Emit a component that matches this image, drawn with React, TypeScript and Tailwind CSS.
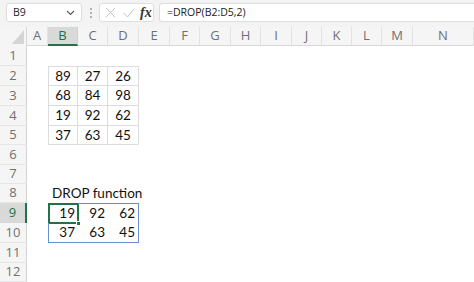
import React from "react";

const colW = [21, 30, 30, 31, 31, 30, 31, 30, 31, 30, 30, 30, 31, 61];
const colL = ["A", "B", "C", "D", "E", "F", "G", "H", "I", "J", "K", "L", "M", "N"];
const rowH = [20, 20, 20, 20, 19, 20, 19, 19, 20, 20, 20, 19];

const data: Record<string, string> = {
  "2-1": "89", "2-2": "27", "2-3": "26",
  "3-1": "68", "3-2": "84", "3-3": "98",
  "4-1": "19", "4-2": "92", "4-3": "62",
  "5-1": "37", "5-2": "63", "5-3": "45",
  "9-1": "19", "9-2": "92", "9-3": "62",
  "10-1": "37", "10-2": "63", "10-3": "45",
};

function cellClass(r: number, c: number): string {
  const cls: string[] = [];
  if (r >= 2 && r <= 5 && c >= 1 && c <= 3) {
    cls.push("border-r border-b border-[#dcdcdc] justify-center");
    if (r === 2) cls.push("border-t");
    if (c === 1) cls.push("border-l");
  }
  if (r >= 9 && r <= 10 && c >= 1 && c <= 3) {
    cls.push("justify-end pr-[3px] border-[#6a8fd0]");
    if (r === 9) cls.push("border-t");
    if (r === 10) cls.push("border-b");
    if (c === 1) cls.push("border-l");
    if (c === 3) cls.push("border-r");
  }
  return cls.join(" ");
}

export default function App() {
  return (
    <div
      className="w-[474px] h-[282px] overflow-hidden bg-white relative"
      style={{ fontFamily: "'Open Sans', 'Noto Sans', sans-serif" }}
    >
      {/* Formula bar */}
      <div className="h-[27px] bg-[#f3f3f3] flex items-start pt-[3px] pl-[6px]">
        <div className="w-[76px] h-[19px] bg-white border border-[#dedede] rounded-[3px] flex items-center pl-[6px] pr-[4px] text-[10.5px] text-[#222]">
          <span className="flex-1">B9</span>
          <svg width="9" height="6" viewBox="0 0 9 6" className="mr-[2px]">
            <path d="M1 1 L4.5 4.5 L8 1" fill="none" stroke="#555" strokeWidth="1.1" />
          </svg>
        </div>
        <div className="w-[17px] h-[19px] flex flex-col items-center justify-center gap-[2px]">
          <div className="w-[2px] h-[2px] bg-[#9a9a9a] rounded-full" />
          <div className="w-[2px] h-[2px] bg-[#9a9a9a] rounded-full" />
          <div className="w-[2px] h-[2px] bg-[#9a9a9a] rounded-full" />
        </div>
        <div className="w-[55px] h-[19px] bg-white border border-[#dedede] rounded-[3px] flex items-center">
          <svg width="11" height="11" viewBox="0 0 11 11" className="ml-[5px]">
            <path d="M1 1 L10 10 M10 1 L1 10" stroke="#c4c4c4" strokeWidth="1" />
          </svg>
          <svg width="12" height="10" viewBox="0 0 12 10" className="ml-[7px]">
            <path d="M1 5 L4.5 9 L11 1" fill="none" stroke="#c4c4c4" strokeWidth="1" />
          </svg>
          <span
            className="ml-[5px] text-[14px] italic font-bold text-[#333] leading-none"
            style={{ fontFamily: "'Liberation Serif', serif" }}
          >
            fx
          </span>
        </div>
        <div className="ml-[5px] flex-1 h-[19px] bg-white border border-[#dedede] border-r-0 rounded-l-[3px] flex items-center pl-[7px] text-[10.5px] text-[#222]">
          =DROP(B2:D5,2)
        </div>
      </div>

      {/* Column headers */}
      <div className="h-[19px] flex bg-[#f5f5f5]">
        <div className="w-[27px] h-full relative border-r border-[#d8d8d8]">
          <svg width="12" height="14" viewBox="0 0 12 14" className="absolute right-[2px] bottom-[2px]">
            <path d="M12 0 L12 14 L0 14 Z" fill="#d4d4d4" />
          </svg>
        </div>
        {colL.map((l, i) => (
          <div
            key={l}
            style={{ width: colW[i] }}
            className={
              i === 1
                ? "h-full flex items-center justify-center bg-[#d9d9d9] border-b-2 border-[#217346] text-[#217346] text-[13px] border-r border-r-[#d0d0d0]"
                : "h-full flex items-center justify-center text-[#707070] text-[13px] border-r border-[#e2e2e2] border-b border-b-[#d8d8d8]"
            }
          >
            {l}
          </div>
        ))}
      </div>

      {/* Rows */}
      {rowH.map((h, ri) => {
        const r = ri + 1;
        return (
          <div key={r} className="flex" style={{ height: h }}>
            <div
              className={
                r === 9
                  ? "w-[27px] h-full flex items-center justify-center bg-[#d9d9d9] border-r-2 border-[#217346] text-[#217346] text-[13px]"
                  : "w-[27px] h-full flex items-center justify-center bg-[#f5f5f5] border-r border-[#d4d4d4] border-b border-b-[#e6e6e6] text-[#707070] text-[13px]"
              }
            >
              {r}
            </div>
            {colW.map((w, ci) => {
              const key = `${r}-${ci}`;
              const v = data[key];
              return (
                <div
                  key={ci}
                  style={{ width: w, fontFamily: "Lato, 'Open Sans', sans-serif" }}
                  className={`h-full flex items-center text-[13.5px] text-[#111] relative ${cellClass(r, ci)}`}
                >
                  {r === 8 && ci === 1 ? (
                    <span className="absolute left-[4px] whitespace-nowrap">DROP function</span>
                  ) : (
                    v
                  )}
                  {r === 9 && ci === 1 && (
                    <div className="absolute left-[-1px] top-[-1px] right-[-1px] bottom-[-1px] border-2 border-[#217346]">
                      <div className="absolute right-[-4px] bottom-[-4px] w-[5px] h-[5px] bg-[#217346] border border-white" />
                    </div>
                  )}
                </div>
              );
            })}
          </div>
        );
      })}
    </div>
  );
}
